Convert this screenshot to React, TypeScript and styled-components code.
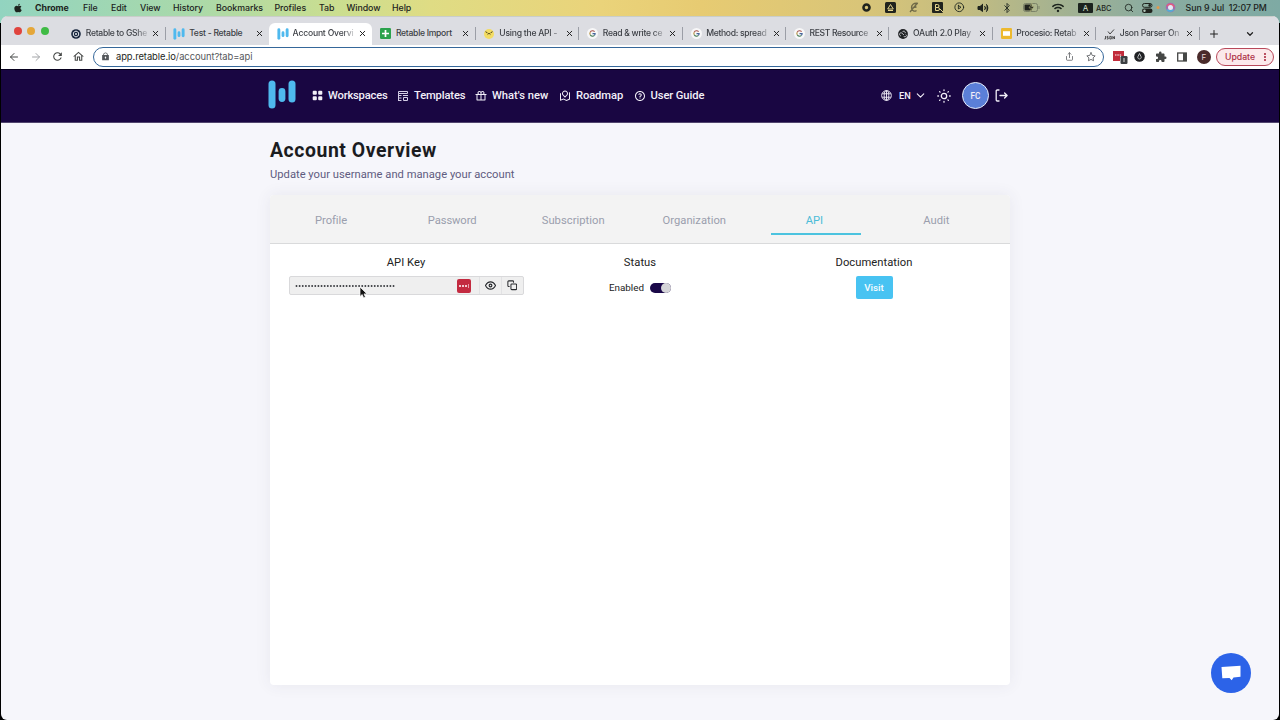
import React from 'react';
import styled, { createGlobalStyle, css } from 'styled-components';
import { FaApple, FaWifi } from 'react-icons/fa';
import { FiVolume2, FiSearch, FiStar, FiBluetooth, FiPlayCircle, FiEye, FiCopy, FiChevronDown, FiX, FiPlus, FiArrowLeft, FiArrowRight, FiShare } from 'react-icons/fi';
import { RiGiftLine, RiRoadMapLine, RiQuestionLine, RiLock2Fill } from 'react-icons/ri';
import { MdRefresh, MdOutlineHome, MdMoreVert, MdExtension } from 'react-icons/md';
import { BsGridFill } from 'react-icons/bs';

const Global = createGlobalStyle`
  * { box-sizing: border-box; }
  body { margin: 0; background: #000; }
  svg { display: block; flex: none; }
`;

const Screen = styled.div`
  position: relative;
  width: 1280px;
  height: 720px;
  overflow: hidden;
  display: flex;
  flex-direction: column;
  font-family: Inter, "Liberation Sans", sans-serif;
  background: #000;
`;

const MenuBar = styled.header`
  height: 23px;
  margin-bottom: -7px;
  padding: 0 12px 8px 13px;
  display: flex;
  align-items: center;
  color: #1c231d;
  font-size: 8.8px;
  background: linear-gradient(90deg, #92d4c0 0, #a9d9aa 190px, #c9de91 330px, #dfdc84 430px, #ead37a 600px, #e7cb72 700px, #d9c578 860px, #c5bd80 960px, #a4b291 1060px, #8baca0 1150px, #7eaaa4 1280px);
`;

const MenuItem = styled.span<{ $w: number; $bold?: boolean; $ls?: number }>`
  width: ${p => p.$w}px;
  white-space: nowrap;
  font-weight: ${p => (p.$bold ? 700 : 500)};
  letter-spacing: ${p => p.$ls ?? -0.04}px;
`;

const MenuStatus = styled.div`
  margin-left: auto;
  display: flex;
  align-items: center;
`;

const StatusCell = styled.span<{ $w: number }>`
  width: ${p => p.$w}px;
  display: flex;
  align-items: center;
  white-space: nowrap;
`;

const BrowserWindow = styled.div`
  position: relative;
  flex: 1;
  margin: 0 1px;
  display: flex;
  flex-direction: column;
  overflow: hidden;
  border-radius: 7px 7px 6px 6px;
  background: #f6f6fb;
`;

const TabStrip = styled.div`
  height: 29px;
  padding: 6px 0 0 13px;
  display: flex;
  align-items: stretch;
  background: #dcdde2;
  border-top: 1px solid #c9cdc9;
`;

const Lights = styled.div`
  width: 48.3px;
  display: flex;
  gap: 5.4px;
  height: 16px;
  align-items: center;
`;

const Light = styled.span<{ $c: string }>`
  width: 8px;
  height: 8px;
  border-radius: 50%;
  background: ${p => p.$c};
`;

const TabBox = styled.div<{ $active?: boolean; $sep?: boolean }>`
  width: 103.4px;
  flex: none;
  display: flex;
  align-items: center;
  padding: 0 5.5px 1px 7px;
  position: relative;
  border-radius: 6px 6px 0 0;
  background: ${p => (p.$active ? '#fff' : 'transparent')};
  color: #3c3f45;
  ${p => p.$sep && css`
    &::after {
      content: '';
      position: absolute;
      right: 0;
      top: 4px;
      width: 1px;
      height: 13px;
      background: #9b9ea6;
    }
  `}
`;

const Favicon = styled.span`
  width: 13px;
  height: 12px;
  margin-right: 3.5px;
  display: grid;
  place-items: center;
`;

const TabTitle = styled.span<{ $ls?: number; $fade?: boolean }>`
  flex: 1;
  white-space: nowrap;
  font-size: 8.6px;
  font-weight: 450;
  line-height: 13px;
  letter-spacing: ${p => p.$ls ?? -0.15}px;
  ${p => p.$fade && css`
    -webkit-mask-image: linear-gradient(90deg, #000 80%, rgba(0, 0, 0, 0.15) 100%);
    mask-image: linear-gradient(90deg, #000 80%, rgba(0, 0, 0, 0.15) 100%);
  `}
`;

const TabClose = styled.span`
  margin-left: 3px;
  color: #222;
`;

const NewTab = styled.div`
  flex: 1;
  display: flex;
  align-items: center;
  justify-content: space-between;
  padding: 0 24px 1px 8px;
  color: #222;
`;

const Toolbar = styled.div`
  height: 24px;
  background: #fff;
  display: flex;
  align-items: center;
  padding: 0 5px 1px 7px;
  color: #454746;
`;

const NavSlot = styled.span<{ $w: number; $dim?: boolean }>`
  width: ${p => p.$w}px;
  color: ${p => (p.$dim ? '#a3a5a8' : 'inherit')};
`;

const AddressBar = styled.div`
  width: 1012px;
  height: 20px;
  border: 1.5px solid #35679a;
  border-radius: 10px;
  display: flex;
  align-items: center;
  padding: 0 7px 0 7px;
  font-size: 9.4px;
  letter-spacing: -0.06px;
  color: #55585c;
`;

const Url = styled.span`
  flex: 1;
  margin-left: 6px;
  b { font-weight: 400; color: #1d1f21; }
`;

const Extensions = styled.div`
  display: flex;
  align-items: center;
  margin-left: 8.5px;
`;

const ExtSlot = styled.span<{ $w: number }>`
  width: ${p => p.$w}px;
`;

const Profile = styled.span`
  width: 14px;
  height: 14px;
  border-radius: 50%;
  background: #4a2b2b;
  color: #e6d5d5;
  font-size: 8px;
  display: grid;
  place-items: center;
  margin-right: 5px;
`;

const UpdateButton = styled.span`
  width: 58px;
  height: 18px;
  border: 1px solid #b8485a;
  border-radius: 9px;
  background: #fbe9eb;
  color: #ad2f45;
  font-size: 8.7px;
  font-weight: 500;
  display: flex;
  align-items: center;
  justify-content: space-between;
  padding: 0 2px 0 8px;
`;

const AppHeader = styled.nav`
  height: 54px;
  border-top: 1px solid #07001f;
  border-bottom: 1px solid #51456e;
  background: #190642;
  color: #f2eff8;
  display: flex;
  align-items: center;
  padding: 0 271px 0 267px;
  font-family: Roboto, "Liberation Sans", sans-serif;
`;

const LogoSlot = styled.span`
  width: 43px;
  padding-bottom: 3px;
`;

const NavLink = styled.a<{ $w: number; $ls?: number }>`
  width: ${p => p.$w}px;
  display: flex;
  align-items: center;
  gap: 5px;
  white-space: nowrap;
  font-size: 11.2px;
  line-height: 14px;
  padding-bottom: 1px;
  font-weight: 500;
  letter-spacing: ${p => p.$ls ?? 0}px;
`;

const LinkIcon = styled.span`
  width: 12px;
  display: grid;
  place-items: center;
`;

const HeaderActions = styled.div`
  margin-left: auto;
  padding-bottom: 1px;
  display: flex;
  align-items: center;
`;

const Language = styled.span`
  display: flex;
  align-items: center;
  width: 56px;
  font-size: 9.2px;
  font-weight: 500;
`;

const LanguageCode = styled.span`
  width: 15px;
  margin-left: 7px;
`;

const Avatar = styled.span`
  width: 27px;
  height: 27px;
  margin: 0 6px 0 11px;
  border-radius: 50%;
  border: 1.5px solid #e6edfb;
  background: #5b7fd8;
  display: grid;
  place-items: center;
  font-size: 8.2px;
  font-weight: 500;
`;

const Page = styled.main`
  width: 740px;
  margin: 0 auto;
  flex: 1;
  font-family: Roboto, "Liberation Sans", sans-serif;
`;

const Title = styled.h1`
  margin: 15px 0 0;
  font-size: 19.4px;
  line-height: 26px;
  font-weight: 700;
  letter-spacing: 0.57px;
  color: #1b1c1f;
`;

const Subtitle = styled.p`
  margin: 4px 0 0;
  font-size: 11.2px;
  line-height: 14px;
  color: #5f5c80;
  letter-spacing: 0.01px;
`;

const Card = styled.section`
  margin-top: 13px;
  height: 490px;
  background: #fff;
  border-radius: 4px;
  box-shadow: 0 0 16px rgba(60, 60, 90, 0.08);
`;

const CardTabs = styled.div`
  height: 49px;
  background: #f3f3f3;
  border-bottom: 1px solid #d9dadb;
  border-radius: 4px 4px 0 0;
  padding-left: 1px;
  display: flex;
`;

const CardTab = styled.div<{ $active?: boolean; $ls: number }>`
  width: 121.1px;
  flex: none;
  display: flex;
  justify-content: center;
  align-items: flex-start;
  padding: 17px 1px 0 0;
  font-size: 11.2px;
  line-height: 17px;
  letter-spacing: ${p => p.$ls}px;
  color: ${p => (p.$active ? '#4bbcd8' : '#9a9ead')};
  ${p => p.$active && css`
    width: 90px;
    margin: 0 15.5px;
    padding-right: 3px;
    height: 40px;
    border-bottom: 2px solid #4bc3df;
  `}
`;

const Columns = styled.div`
  display: grid;
  grid-template-columns: 234px 234px 234px;
  padding: 11px 19px;
`;

const Column = styled.div`
  display: flex;
  flex-direction: column;
  align-items: center;
`;

const ColumnTitle = styled.div`
  font-size: 11.2px;
  line-height: 16px;
  color: #222;
  letter-spacing: 0.05px;
`;

const KeyField = styled.div`
  margin-top: 5px;
  width: 235px;
  height: 19px;
  border: 1px solid #d9d9db;
  border-radius: 2px;
  background: #efefef;
  display: flex;
  align-items: center;
  color: #26282c;
`;

const KeyMask = styled.span`
  flex: 1;
  padding-left: 5px;
`;

const KeyManager = styled.span`
  margin-right: 8px;
`;

const KeyAction = styled.span`
  width: 22px;
  height: 17px;
  border-left: 1px solid #e2e2e4;
  display: grid;
  place-items: center;
`;

const StatusRow = styled.div`
  margin-top: 9px;
  display: flex;
  align-items: center;
  gap: 6px;
  font-size: 9.9px;
  line-height: 16px;
  color: #222;
`;

const Toggle = styled.span`
  width: 21px;
  height: 10px;
  border-radius: 5px;
  background: #1a0848;
  display: flex;
  justify-content: flex-end;
`;

const Knob = styled.span`
  width: 10px;
  height: 10px;
  border-radius: 50%;
  background: #d5d5d8;
`;

const VisitButton = styled.span`
  margin-top: 5px;
  width: 37px;
  height: 23px;
  border-radius: 2px;
  background: #48c3f2;
  color: #f5fcff;
  display: grid;
  place-items: center;
  font-size: 9.8px;
  font-weight: 500;
`;

const ChatBubble = styled.div`
  position: absolute;
  right: 28.5px;
  bottom: 27px;
  width: 40px;
  height: 40px;
  border-radius: 50%;
  background: #2c63e8;
  display: grid;
  place-items: center;
`;

const Pointer = styled.div`
  position: absolute;
  left: 359px;
  top: 286px;
`;

const RetableMark = ({ w, h }: { w: number; h: number }) => (
  <svg width={w} height={h} viewBox="0 0 28 29" fill="#4fb9ee">
    <rect x="0.5" y="0.5" width="7" height="28" rx="3.5" />
    <rect x="10.6" y="8" width="6.8" height="14" rx="3.4" />
    <rect x="20.5" y="0.5" width="7" height="22" rx="3.5" />
  </svg>
);

const GoogleMark = () => (
  <svg width="11" height="11" viewBox="0 0 12 12">
    <circle cx="6" cy="6" r="6" fill="#f7f7f8" />
    <path d="M8.3 4A2.9 2.9 0 0 0 3.5 4.6" fill="none" stroke="#a8544d" strokeWidth="1.2" />
    <path d="M3.5 4.6a2.9 2.9 0 0 0 0 2.8" fill="none" stroke="#b5903c" strokeWidth="1.2" />
    <path d="M3.5 7.4a2.9 2.9 0 0 0 4.6.7" fill="none" stroke="#477d56" strokeWidth="1.2" />
    <path d="M6 6.1h2.9a2.9 2.9 0 0 1-.8 2" fill="none" stroke="#45659a" strokeWidth="1.2" />
  </svg>
);

const HexMark = () => (
  <svg width="10" height="10" viewBox="0 0 10 10">
    <circle cx="5" cy="5" r="4.8" fill="#16243c" />
    <path d="M5 2l2.6 1.5v3L5 8 2.4 6.5v-3z" fill="none" stroke="#e4e8ee" strokeWidth="1" />
    <circle cx="5" cy="5" r="1" fill="#e4e8ee" />
  </svg>
);

const SheetsMark = () => (
  <svg width="11" height="11" viewBox="0 0 11 11">
    <rect width="11" height="11" rx="1.2" fill="#2ba24c" />
    <path d="M2 5.5h7M5.5 2v7" stroke="#fff" strokeWidth="1.7" />
  </svg>
);

const BeeMark = () => (
  <svg width="10" height="10" viewBox="0 0 10 10">
    <circle cx="5" cy="5" r="5" fill="#f3dc62" />
    <path d="M1.5 2.7l2 1.2M8.5 2.7l-2 1.2M3.6 5.5L5 4.2l1.4 1.3" stroke="#4b431d" strokeWidth="1" fill="none" />
  </svg>
);

const OAuthMark = () => (
  <svg width="10" height="10" viewBox="0 0 10 10">
    <circle cx="5" cy="5" r="4.9" fill="#202225" />
    <path d="M3 6.8a1.5 1.5 0 1 1 1-2.6L6 6M4.5 3.2a1.4 1.4 0 1 1 2.6 1M7.8 5.5a1.3 1.3 0 1 1-2 1.5" stroke="#dcdde2" strokeWidth="0.8" fill="none" />
  </svg>
);

const SlidesMark = () => (
  <svg width="11" height="11" viewBox="0 0 11 11">
    <rect width="11" height="11" rx="1.2" fill="#edb92e" />
    <rect x="2" y="3.2" width="7" height="4.6" fill="#fff" />
  </svg>
);

const JsonMark = () => (
  <svg width="12" height="12" viewBox="0 0 12 12" stroke="#333" fill="none">
    <path d="M4 3.5l2 2.5 4-4.5" strokeWidth="0.9" />
    <path d="M1.500 8v3H.4M4.300 8.400H3v1.300h1.200V11H2.800M5.800 8.400h1.500V11H5.800zM8.800 11.200V8.400l1.700 2.600V8.200" strokeWidth="0.8" />
  </svg>
);

const TemplatesMark = () => (
  <svg width="10" height="10" viewBox="0 0 10 10" fill="none" stroke="#d5cee6" strokeWidth="1">
    <path d="M.5.5h9v2h-9zM.5 2.500v7M0 4.500h3.500M0 7h3.500M0 9.500h3.500M5 4.500h5M5.500 6.500h4v3h-4z" />
  </svg>
);

const GlobeMark = () => (
  <svg width="11" height="11" viewBox="0 0 12 12" fill="none" stroke="#f2eff8" strokeWidth="1">
    <circle cx="6" cy="6" r="5.3" />
    <ellipse cx="6" cy="6" rx="2.500" ry="5.300" />
    <path d="M6 .7v10.600M1.300 4.100h9.400M1.300 7.900h9.400" />
  </svg>
);

const SunMark = () => (
  <svg width="14" height="14" viewBox="0 0 14 14" fill="none" stroke="#f2eff8" strokeWidth="1.300" strokeLinecap="round">
    <circle cx="7" cy="7" r="2.700" />
    <path d="M7 .8v.7M7 12.500v.7M.8 7h.7M12.500 7h.7M2.600 2.600l.5.5M10.900 10.900l.5.5M2.600 11.400l.5-.5M10.900 3.100l.5-.5" />
  </svg>
);

const LogoutMark = () => (
  <svg width="13" height="13" viewBox="0 0 13 13" fill="none" stroke="#f2eff8" strokeWidth="1.3" strokeLinecap="round" strokeLinejoin="round">
    <path d="M4 1H2.200a1 1 0 0 0-1 1v9a1 1 0 0 0 1 1H4M5 6.500h7M9.600 4l2.500 2.500L9.600 9" />
  </svg>
);

const KeyManagerMark = () => (
  <svg width="14" height="14" viewBox="0 0 14 14">
    <rect width="14" height="14" rx="2" fill="#c32a40" />
    <circle cx="3" cy="7" r="1" fill="#fff" />
    <circle cx="6" cy="7" r="1" fill="#fff" />
    <circle cx="9" cy="7" r="1" fill="#fff" />
    <path d="M11.5 5v4" stroke="#f2b9c1" strokeWidth="0.8" />
  </svg>
);

const tabs = [
  { title: 'Retable to GShe', icon: <HexMark />, sep: true, fade: true, ls: -0.3 },
  { title: 'Test - Retable', icon: <RetableMark w={12} h={12} />, ls: -0.27 },
  { title: 'Account Overvi', icon: <RetableMark w={12} h={12} />, active: true, fade: true, ls: -0.2 },
  { title: 'Retable Import', icon: <SheetsMark />, sep: true, ls: -0.3 },
  { title: 'Using the API -', icon: <BeeMark />, sep: true, fade: true, ls: -0.25 },
  { title: 'Read & write ce', icon: <GoogleMark />, sep: true, fade: true, ls: -0.3 },
  { title: 'Method: spread', icon: <GoogleMark />, sep: true, fade: true, ls: -0.32 },
  { title: 'REST Resource', icon: <GoogleMark />, sep: true, fade: true, ls: -0.35 },
  { title: 'OAuth 2.0 Play', icon: <OAuthMark />, sep: true, fade: true, ls: -0.2 },
  { title: 'Procesio: Retab', icon: <SlidesMark />, sep: true, fade: true, ls: -0.3 },
  { title: 'Json Parser On', icon: <JsonMark />, sep: true, fade: true, ls: -0.24 },
];

const menu: [string, number][] = [
  ['File', 28], ['Edit', 29], ['View', 33], ['History', 43], ['Bookmarks', 58.5],
  ['Profiles', 44.5], ['Tab', 27.5], ['Window', 45.5], ['Help', 30],
];

const settings: { label: string; active?: boolean; ls: number }[] = [
  { label: 'Profile', ls: -0.05 },
  { label: 'Password', ls: -0.1 },
  { label: 'Subscription', ls: 0.05 },
  { label: 'Organization', ls: 0.02 },
  { label: 'API', active: true, ls: 0 },
  { label: 'Audit', ls: 0.05 },
];

export default function App() {
  return (
    <>
      <Global />
      <Screen>
        <MenuBar>
          <MenuItem $w={22}><FaApple size={10} /></MenuItem>
          <MenuItem $w={48} $bold>Chrome</MenuItem>
          {menu.map(([label, w]) => <MenuItem key={label} $w={w}>{label}</MenuItem>)}
          <MenuStatus>
            <StatusCell $w={23}>
              <svg width="9" height="9" viewBox="0 0 9 9"><circle cx="4.5" cy="4.5" r="3" fill="none" stroke="#20231d" strokeWidth="2.600" /></svg>
            </StatusCell>
            <StatusCell $w={23}>
              <svg width="11" height="11" viewBox="0 0 11 11"><rect width="11" height="11" rx="1.5" fill="#20231d" /><path d="M5.5 2.500l2.800 4.500H2.700zM3 8.500h5" fill="none" stroke="#e4d48c" strokeWidth="1" /></svg>
            </StatusCell>
            <StatusCell $w={24}>
              <svg width="11" height="11" viewBox="0 0 11 11" fill="none" stroke="#6f6a48" strokeWidth="1.3"><path d="M10 1.500C6 .5 3 3 3.500 6s3 4 5 2.500M2 10L9.500 1M4.500 5.500l4-.5" /></svg>
            </StatusCell>
            <StatusCell $w={22}>
              <svg width="12" height="12" viewBox="0 0 12 12"><rect width="11" height="11" rx="1" fill="#20231d" /><path d="M3.500 2.500h2a1.400 1.400 0 0 1 0 3h-2zm0 3h2.500a1.400 1.400 0 0 1 0 3H3.500zM8 7l3 3" fill="none" stroke="#e4d48c" strokeWidth="1" /></svg>
            </StatusCell>
            <StatusCell $w={23}><FiPlayCircle size={10.5} /></StatusCell>
            <StatusCell $w={25}><FiVolume2 size={12} fill="#20231d" /></StatusCell>
            <StatusCell $w={21}><FiBluetooth size={10} /></StatusCell>
            <StatusCell $w={29}>
              <svg width="17" height="9" viewBox="0 0 17 9"><rect x=".5" y=".5" width="14" height="8" rx="2" fill="none" stroke="#7c8369" /><rect x="1.5" y="1.5" width="7.5" height="6" rx="1" fill="#20231d" /><path d="M9 0L6 5h2.500L7 9l4-5.500H8.500z" fill="#20231d" stroke="#bdbc83" strokeWidth=".5" /><path d="M16 3v3" stroke="#7c8369" /></svg>
            </StatusCell>
            <StatusCell $w={26}><FaWifi size={12} /></StatusCell>
            <StatusCell $w={18}>
              <svg width="15" height="10" viewBox="0 0 15 10"><rect width="15" height="10" rx="1" fill="#1b221e" /><text x="7.5" y="8" fontSize="8" textAnchor="middle" fill="#d9e2d2">A</text></svg>
            </StatusCell>
            <MenuItem $w={27.5}><small>ABC</small></MenuItem>
            <StatusCell $w={18}><FiSearch size={10} /></StatusCell>
            <StatusCell $w={14}>
              <svg width="11" height="10" viewBox="0 0 11 10"><rect x=".5" y=".5" width="9.5" height="3.8" rx="1.9" fill="none" stroke="#20231d" /><rect y="5.5" width="10.5" height="4.5" rx="2.2" fill="#20231d" /><circle cx="7.7" cy="2.4" r="1.3" fill="#20231d" /><circle cx="2.5" cy="7.7" r="1.2" fill="#b4c9bc" /></svg>
            </StatusCell>
            <StatusCell $w={30}>
              <svg width="20" height="11" viewBox="0 0 20 11"><circle cx="2" cy="5.5" r="1.500" fill="#e1994d" /><circle cx="14.5" cy="5.5" r="4.8" fill="#a06fb0" /><path d="M11 4a4 4 0 0 1 7 1" stroke="#e45b7c" strokeWidth="1.6" fill="none" /><path d="M11 7.500a4 4 0 0 0 6.500 0" stroke="#4fb1d8" strokeWidth="1.6" fill="none" /><circle cx="14.5" cy="5.5" r="2.500" fill="#e6e9f4" /></svg>
            </StatusCell>
            <MenuItem $w={82.5}>Sun 9 Jul&nbsp; 12:07 PM</MenuItem>
          </MenuStatus>
        </MenuBar>

        <BrowserWindow>
          <TabStrip>
            <Lights><Light $c="#e0443e" /><Light $c="#e5a73a" /><Light $c="#3fbb45" /></Lights>
            {tabs.map(t => (
              <TabBox key={t.title} $active={t.active} $sep={t.sep}>
                <Favicon>{t.icon}</Favicon>
                <TabTitle $fade={t.fade} $ls={t.ls}>{t.title}</TabTitle>
                <TabClose><FiX size={9} strokeWidth={2.6} /></TabClose>
              </TabBox>
            ))}
            <NewTab><FiPlus size={12} /><FiChevronDown size={10} strokeWidth={3} /></NewTab>
          </TabStrip>

          <Toolbar>
            <NavSlot $w={22}><FiArrowLeft size={12} /></NavSlot>
            <NavSlot $w={21} $dim><FiArrowRight size={12} /></NavSlot>
            <NavSlot $w={21}><MdRefresh size={13} /></NavSlot>
            <NavSlot $w={21}><MdOutlineHome size={13} /></NavSlot>
            <AddressBar>
              <RiLock2Fill size={9} />
              <Url><b>app.retable.io</b>/account?tab=api</Url>
              <NavSlot $w={21}><FiShare size={9} /></NavSlot>
              <FiStar size={10} />
            </AddressBar>
            <Extensions>
              <ExtSlot $w={21}>
                <svg width="15" height="14" viewBox="0 0 15 14"><path d="M0 1h11v5H7v5H0z" fill="#c22c3c" /><path d="M2 5h7" stroke="#fff" strokeWidth="1.2" strokeDasharray="1.5 .8" /><rect x="7.5" y="6" width="7" height="8" rx="1.2" fill="#3d4043" /><path d="M11 8v4" stroke="#ddd" /></svg>
              </ExtSlot>
              <ExtSlot $w={21}>
                <svg width="11" height="11" viewBox="0 0 11 11"><circle cx="5.5" cy="5.5" r="5.3" fill="#202124" /><path d="M5.5 2.500L7 5.500a1.700 1.700 0 1 1-3 0z" fill="none" stroke="#cfd2d5" strokeWidth=".9" /></svg>
              </ExtSlot>
              <ExtSlot $w={22}><MdExtension size={12} /></ExtSlot>
              <ExtSlot $w={20}>
                <svg width="10" height="10" viewBox="0 0 10 10"><rect x=".7" y="1" width="8.6" height="8" fill="none" stroke="#454746" strokeWidth="1.3" /><rect x="6" y="1" width="3.5" height="8" fill="#454746" /></svg>
              </ExtSlot>
              <Profile>F</Profile>
              <UpdateButton>Update<MdMoreVert size={12} /></UpdateButton>
            </Extensions>
          </Toolbar>

          <AppHeader>
            <LogoSlot><RetableMark w={28} h={29} /></LogoSlot>
            <NavLink $w={86} $ls={-0.2}><LinkIcon><BsGridFill size={11} /></LinkIcon>Workspaces</NavLink>
            <NavLink $w={78} $ls={-0.15}><LinkIcon><TemplatesMark /></LinkIcon>Templates</NavLink>
            <NavLink $w={84}><LinkIcon><RiGiftLine size={12} /></LinkIcon>What's new</NavLink>
            <NavLink $w={74.5} $ls={-0.1}><LinkIcon><RiRoadMapLine size={12} /></LinkIcon>Roadmap</NavLink>
            <NavLink $w={80} $ls={-0.1}><LinkIcon><RiQuestionLine size={12} /></LinkIcon>User Guide</NavLink>
            <HeaderActions>
              <Language><GlobeMark /><LanguageCode>EN</LanguageCode><FiChevronDown size={13} /></Language>
              <SunMark />
              <Avatar>FC</Avatar>
              <LogoutMark />
            </HeaderActions>
          </AppHeader>

          <Page>
            <Title>Account Overview</Title>
            <Subtitle>Update your username and manage your account</Subtitle>
            <Card>
              <CardTabs>
                {settings.map(s => <CardTab key={s.label} $active={s.active} $ls={s.ls}>{s.label}</CardTab>)}
              </CardTabs>
              <Columns>
                <Column>
                  <ColumnTitle>API Key</ColumnTitle>
                  <KeyField>
                    <KeyMask>
                      <svg width="101" height="4" viewBox="0 0 101 4"><path d="M1.500 2h99" stroke="#3a3c40" strokeWidth="1.9" strokeLinecap="round" strokeDasharray="0.01 3.12" /></svg>
                    </KeyMask>
                    <KeyManager><KeyManagerMark /></KeyManager>
                    <KeyAction><FiEye size={11} strokeWidth={2.500} /></KeyAction>
                    <KeyAction><FiCopy size={10.5} strokeWidth={2.300} /></KeyAction>
                  </KeyField>
                </Column>
                <Column>
                  <ColumnTitle>Status</ColumnTitle>
                  <StatusRow>Enabled<Toggle><Knob /></Toggle></StatusRow>
                </Column>
                <Column>
                  <ColumnTitle>Documentation</ColumnTitle>
                  <VisitButton>Visit</VisitButton>
                </Column>
              </Columns>
            </Card>
          </Page>
          <ChatBubble>
            <svg width="20" height="16" viewBox="0 0 20 16" fill="#fff"><path d="M.5 2L19.500.7v11L12.500 12.500l-1.800 2.800L8.500 13l-7.200.3z" /></svg>
          </ChatBubble>
        </BrowserWindow>
        <Pointer>
          <svg width="9" height="13" viewBox="0 0 9 13"><path d="M1 1v9.500l2.200-2 1.500 3.400 1.700-.8L5 7.900h3z" fill="#111" stroke="#fff" strokeWidth=".7" /></svg>
        </Pointer>
      </Screen>
    </>
  );
}
